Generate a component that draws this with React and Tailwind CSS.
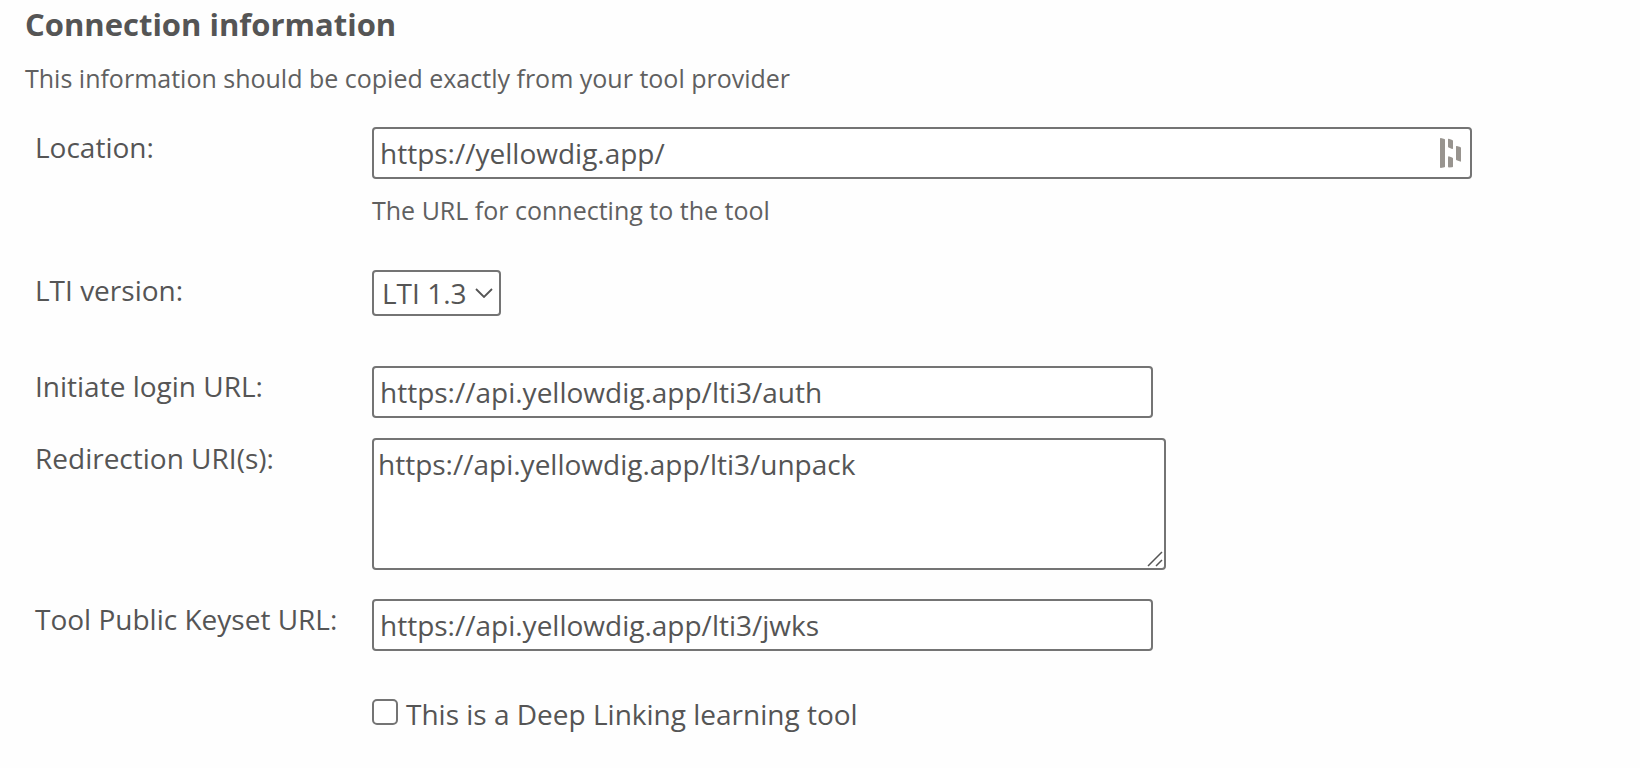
import React, { useState } from 'react';

const fieldClass = 'block w-full rounded-[4px] border-2 border-[#747474] bg-white text-[28px] text-[#555555]';

const Row = ({ label, htmlFor, className, children }) => (
  <div className={`flex items-start ${className}`}>
    <div className="w-[347px] shrink-0 pl-[10px] text-[28px] leading-10">
      {label && <label htmlFor={htmlFor}>{label}</label>}
    </div>
    <div className="min-w-0 flex-1">{children}</div>
  </div>
);

const TextField = ({ id, value, onChange, className = '' }) => (
  <input
    id={id}
    type="text"
    spellCheck="false"
    value={value}
    onChange={(e) => onChange(id, e.target.value)}
    className={`${fieldClass} h-[52px] px-[6px] ${className}`}
  />
);

const PasswordManagerIcon = () => (
  <svg viewBox="0 0 22 30" className="h-[30px] w-[22px]" fill="#98948f" aria-hidden="true">
    <path d="M0 0.8Q0 0 0.8 0.1L4.4 1Q5 1.2 5 1.9V28.4Q5 29.1 4.4 29.3L0.8 30Q0 30 0 29.3Z" />
    <path d="M8 1.3Q8 0.4 8.8 0.7L12.3 2Q13 2.3 13 3.1V10.2Q13 11.2 12.1 10.9L8.7 9.6Q8 9.3 8 8.5Z" />
    <path d="M8 20.5Q8 18 8.7 18.3L12.1 19.5Q13 19.8 13 20.6V28.4Q13 29.2 12.2 29.2L8.7 29.4Q8 29.4 8 28.6Z" />
    <path d="M16 8.6Q16 7.7 16.8 8L20.3 9.1Q21 9.4 21 10.2V23Q21 23.9 20.2 23.6L16.7 22.3Q16 22 16 21.2Z" />
  </svg>
);

const App = () => {
  const [form, setForm] = useState({
    location: 'https://yellowdig.app/',
    version: '1.3',
    login: 'https://api.yellowdig.app/lti3/auth',
    redirect: 'https://api.yellowdig.app/lti3/unpack',
    keyset: 'https://api.yellowdig.app/lti3/jwks',
    deepLinking: false,
  });

  const update = (key, value) => setForm({ ...form, [key]: value });

  return (
    <main className="min-h-screen bg-[#fefefe] px-[25px] pt-1 pb-6 font-['Open_Sans',sans-serif] text-[#555555]">
      <h2 className="text-[31px] leading-10 font-bold">Connection information</h2>
      <p className="mt-[15px] text-[25px] leading-[38px] text-[#606060]">
        This information should be copied exactly from your tool provider
      </p>

      <form>
        <Row label="Location:" htmlFor="location" className="mt-[30px]">
          <div className="relative max-w-[1100px]">
            <TextField id="location" value={form.location} onChange={update} className="pr-12" />
            <div className="pointer-events-none absolute inset-y-0 right-[10px] flex items-center">
              <PasswordManagerIcon />
            </div>
          </div>
          <p className="mt-3 text-[25px] leading-[38px] text-[#606060]">The URL for connecting to the tool</p>
        </Row>

        <Row label="LTI version:" htmlFor="version" className="mt-[41px]">
          <div className="relative w-[129px]">
            <select
              id="version"
              value={form.version}
              onChange={(e) => update('version', e.target.value)}
              className={`${fieldClass} h-[46px] appearance-none pl-2`}
            >
              <option value="1.1">LTI 1.1</option>
              <option value="1.3">LTI 1.3</option>
            </select>
            <svg
              viewBox="0 0 18 10"
              className="pointer-events-none absolute top-[18px] right-2 h-[10px] w-[18px]"
              fill="none"
              stroke="#555555"
              strokeWidth="1.8"
              aria-hidden="true"
            >
              <path d="M1 1L9 9L17 1" />
            </svg>
          </div>
        </Row>

        <Row label="Initiate login URL:" htmlFor="login" className="mt-[50px]">
          <TextField id="login" value={form.login} onChange={update} className="max-w-[781px]" />
        </Row>

        <Row label="Redirection URI(s):" htmlFor="redirect" className="mt-5">
          <div className="relative max-w-[794px]">
            <textarea
              id="redirect"
              rows="3"
              spellCheck="false"
              value={form.redirect}
              onChange={(e) => update('redirect', e.target.value)}
              className={`${fieldClass} h-[132px] resize-none px-1 py-[5px] leading-[38px]`}
            />
            {/* Resize grip */}
            <svg
              viewBox="0 0 16 16"
              className="pointer-events-none absolute right-[3px] bottom-[3px] h-4 w-4"
              fill="none"
              stroke="#555555"
              strokeWidth="1.5"
              aria-hidden="true"
            >
              <path d="M1 15L15 1M9 15L15 9" />
            </svg>
          </div>
        </Row>

        <Row label="Tool Public Keyset URL:" htmlFor="keyset" className="mt-[29px]">
          <TextField id="keyset" value={form.keyset} onChange={update} className="max-w-[781px]" />
        </Row>

        <Row className="mt-[43px]">
          <div className="flex items-start gap-2">
            <input
              id="deepLinking"
              type="checkbox"
              checked={form.deepLinking}
              onChange={(e) => update('deepLinking', e.target.checked)}
              className="mt-[5px] h-[26px] w-[26px] shrink-0 appearance-none rounded-[5px] border-2 border-[#747474] bg-white checked:bg-[#0f6cbf]"
            />
            <label htmlFor="deepLinking" className="text-[28px] leading-10">
              This is a Deep Linking learning tool
            </label>
          </div>
        </Row>
      </form>
    </main>
  );
};

export default App;
